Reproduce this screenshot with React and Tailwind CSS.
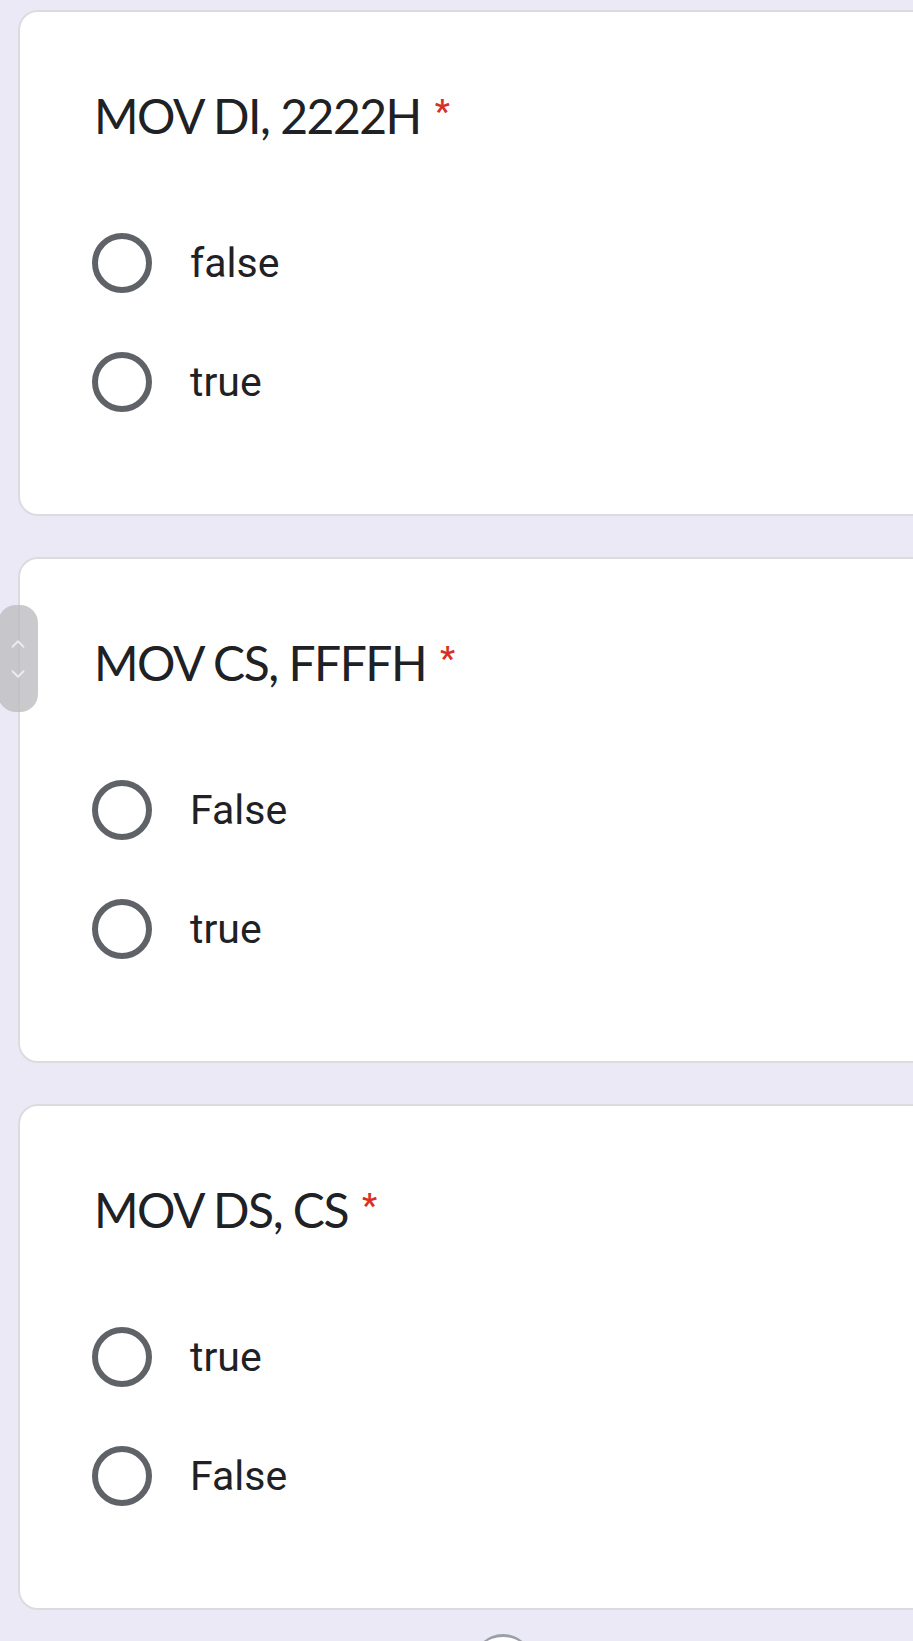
import { ChevronUp, ChevronDown } from 'lucide-react'

const QUESTIONS = [
  { title: 'MOV DI, 2222H', options: ['false', 'true'] },
  { title: 'MOV CS, FFFFH', options: ['False', 'true'] },
  { title: 'MOV DS, CS', options: ['true', 'False'] },
]

function Radio({ label }) {
  return (
    <div className="flex items-center h-[60px]">
      <div className="w-[60px] h-[60px] rounded-full border-[6px] border-[#5f6368] shrink-0" />
      <span className="ml-[38px] text-[41px] leading-none text-[#202124] font-['Roboto',sans-serif]">{label}</span>
    </div>
  )
}

function QuestionCard({ title, options }) {
  return (
    <div className="h-[506px] w-[940px] shrink-0 bg-white rounded-[20px] border-2 border-[#dadce0] pl-[72px] pt-[80px]">
      <h2 className="ml-[2px] flex items-start text-[48px] leading-none tracking-[-1.5px] text-[#202124] font-['Lato',sans-serif] font-normal">
        <span>{title}</span>
        <span className="ml-[14px] mt-[2px] text-[34px] tracking-normal text-[#d93025] font-['Roboto',sans-serif] font-medium">*</span>
      </h2>
      <div className="mt-[93px] flex flex-col gap-[59px]">
        {options.map((o) => <Radio key={o} label={o} />)}
      </div>
    </div>
  )
}

export default function App() {
  return (
    <div className="relative h-[1641px] overflow-hidden bg-[#ece9f6]">
      <div className="flex flex-col gap-[41px] pt-[10px] pl-[18px]">
        {QUESTIONS.map((q) => <QuestionCard key={q.title} {...q} />)}
      </div>

      {/* scroll handle */}
      <div className="absolute left-[-2px] top-[605px] w-[40px] h-[107px] rounded-[18px] bg-[#bdbdc0]/80 flex flex-col items-center justify-center gap-[8px] text-[#ececee]">
        <ChevronUp size={22} strokeWidth={2} />
        <ChevronDown size={22} strokeWidth={2} />
      </div>

      {/* floating button peeking at bottom */}
      <div className="absolute left-[473px] top-[1634px] w-[60px] h-[60px] rounded-full bg-white border-t-[3px] border-[#9aa0a6] shadow-md" />
    </div>
  )
}
